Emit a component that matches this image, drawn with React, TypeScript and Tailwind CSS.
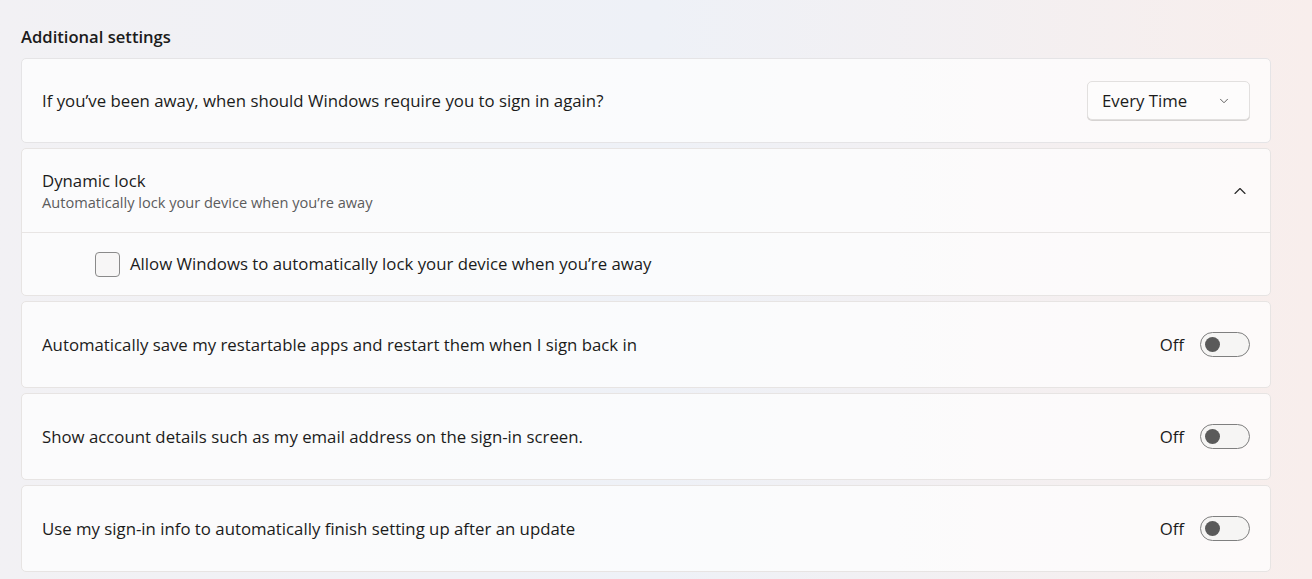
import { ChevronDown, ChevronUp } from 'lucide-react';

interface ToggleRowProps {
  label: string;
}

const Toggle = () => (
  <div className="flex items-center gap-4">
    <span className="text-[16.8px] text-[#1b1b1b]">Off</span>
    <div className="flex h-[25px] w-[50px] items-center rounded-full border border-[#7f7f7f] bg-[#f6f5f4] px-[4px]">
      <div className="h-[15px] w-[15px] rounded-full bg-[#5a5a5a]" />
    </div>
  </div>
);

const ToggleRow: React.FC<ToggleRowProps> = ({ label }) => (
  <div className="flex h-[87px] items-center justify-between rounded-[5px] border border-[#e7e4e3] bg-white/70 pl-[20px] pr-[20px]">
    <span className="text-[16.8px] text-[#1b1b1b]">{label}</span>
    <Toggle />
  </div>
);

export default function App() {
  return (
    <div
      className="h-[579px] w-[1312px] overflow-hidden bg-gradient-to-r from-[#f2f1f4] via-[#eef1f7] to-[#f8eeec] px-[21px] pt-[22px]"
      style={{ fontFamily: '"Open Sans", "Noto Sans", sans-serif' }}
    >
      <h2 className="mb-[6px] text-[16.6px] leading-[30px] font-semibold text-[#1b1b1b]">Additional settings</h2>
      <div className="flex w-[1250px] flex-col gap-[5px]">
        <div className="flex h-[85px] items-center justify-between rounded-[5px] border border-[#e5e4e6] bg-white/70 pl-[20px] pr-[20px]">
          <span className="text-[16.8px] text-[#1b1b1b]">
            If you’ve been away, when should Windows require you to sign in again?
          </span>
          <div className="flex h-[39px] w-[163px] items-center justify-between rounded-[5px] border border-[#e2e0df] bg-[#fdfcfc] pl-[14px] pr-[18px] shadow-[0_1px_0_#d6d3d2]">
            <span className="text-[16.8px] text-[#1b1b1b]">Every Time</span>
            <ChevronDown size={14} strokeWidth={1.5} className="text-[#4a4a4a]" />
          </div>
        </div>

        <div className="rounded-[5px] border border-[#e7e4e3] bg-white/70">
          <div className="flex h-[84px] items-center justify-between border-b border-[#e8e5e4] pl-[20px] pr-[20px]">
            <div className="flex flex-col">
              <span className="text-[16.8px] leading-[22px] text-[#1b1b1b]">Dynamic lock</span>
              <span className="text-[14.6px] leading-[20px] text-[#5c5c5c]">
                Automatically lock your device when you’re away
              </span>
            </div>
            <ChevronUp size={20} strokeWidth={1.4} className="text-[#2a2a2a]" />
          </div>
          <div className="flex h-[62px] items-center gap-[10px] pl-[73px]">
            <div className="h-[25px] w-[25px] rounded-[4px] border border-[#8a8a8a] bg-[#f7f6f6]" />
            <span className="text-[16.8px] text-[#1b1b1b]">
              Allow Windows to automatically lock your device when you’re away
            </span>
          </div>
        </div>

        <ToggleRow label="Automatically save my restartable apps and restart them when I sign back in" />
        <ToggleRow label="Show account details such as my email address on the sign-in screen." />
        <ToggleRow label="Use my sign-in info to automatically finish setting up after an update" />
      </div>
    </div>
  );
}
